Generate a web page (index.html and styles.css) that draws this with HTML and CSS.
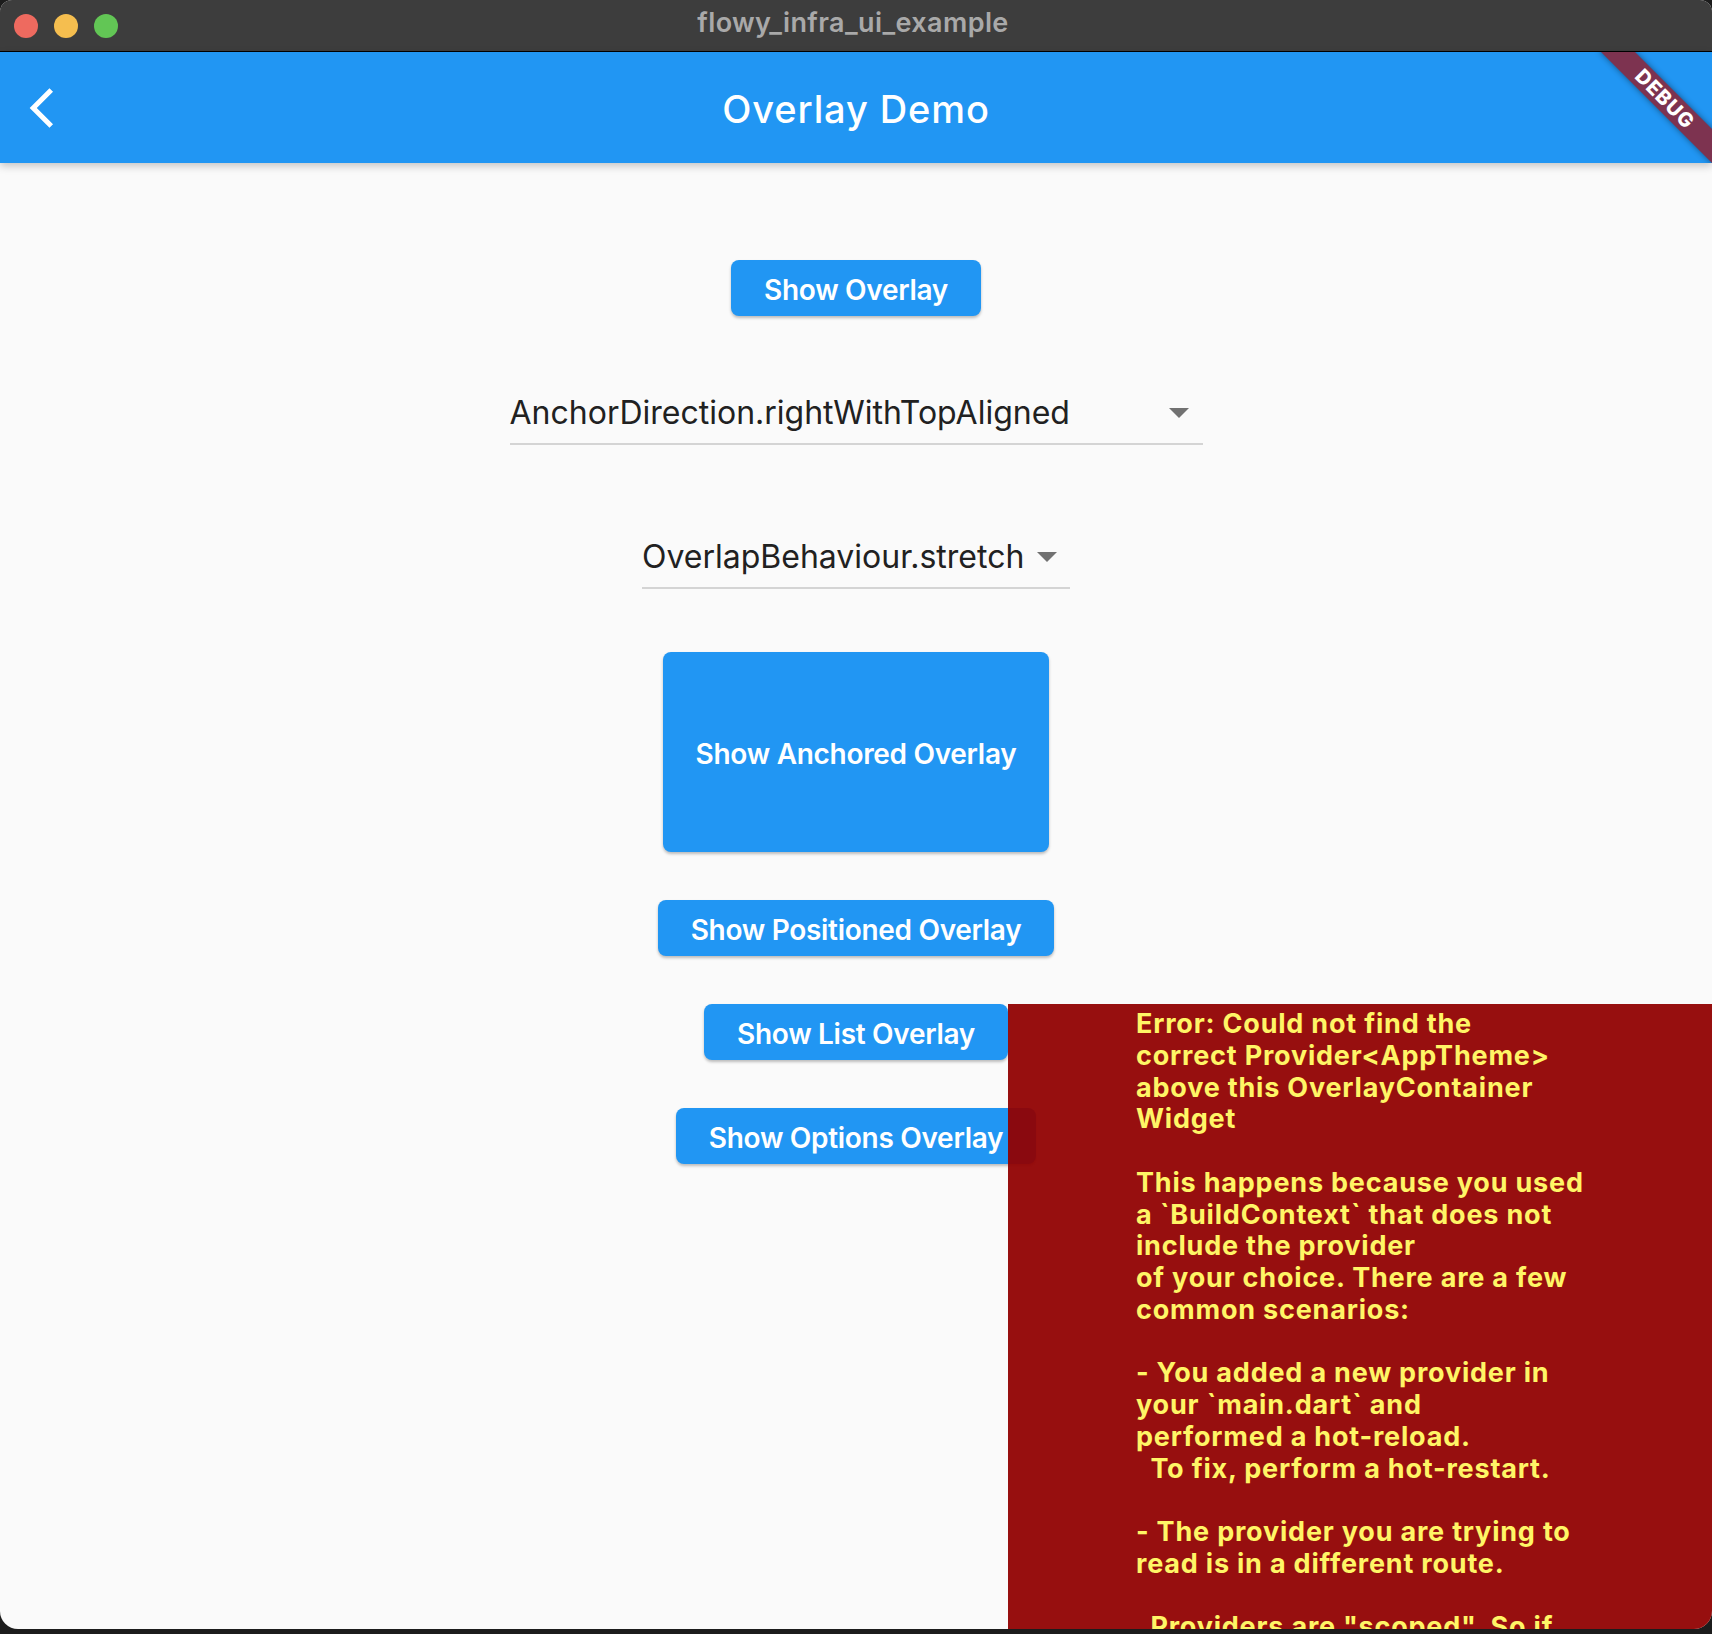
FILE: index.html
```html
<!DOCTYPE html>
<html lang="en">
<head>
    <meta charset="UTF-8">
    <meta name="viewport" content="width=device-width, initial-scale=1.0">
    <title>flowy_infra_ui_example</title>
    <link rel="stylesheet" href="styles.css">
</head>
<body>
    <div class="window">
        <div class="title-bar">
            <div class="traffic-lights">
                <span class="light red"></span>
                <span class="light yellow"></span>
                <span class="light green"></span>
            </div>
            <div class="window-title">flowy_infra_ui_example</div>
            <div></div>
        </div>

        <header class="app-bar">
            <div class="back-btn">
                <svg width="48" height="48" viewBox="0 0 24 24">
                    <path d="M17.51 3.87L15.73 2.1 5.84 12l9.9 9.9 1.77-1.77L9.38 12l8.13-8.13z" fill="#fff"/>
                </svg>
            </div>
            <h1 class="app-title">Overlay Demo</h1>
            <div></div>
            <div class="debug-banner">DEBUG</div>
        </header>

        <main class="content">
            <button class="btn first">Show Overlay</button>

            <div class="dropdown wide">
                <span>AnchorDirection.rightWithTopAligned</span>
                <span class="arrow"></span>
            </div>

            <div class="dropdown narrow">
                <span>OverlapBehaviour.stretch</span>
                <span class="arrow"></span>
            </div>

            <button class="btn tall">Show Anchored Overlay</button>
            <button class="btn">Show Positioned Overlay</button>
            <button class="btn">Show List Overlay</button>
            <button class="btn">Show Options Overlay</button>
        </main>

        <div class="error-box">Error: Could not find the
correct Provider&lt;AppTheme&gt;
above this OverlayContainer
Widget

This happens because you used
a `BuildContext` that does not
include the provider
of your choice. There are a few
common scenarios:

- You added a new provider in
your `main.dart` and
performed a hot-reload.
  To fix, perform a hot-restart.

- The provider you are trying to
read is in a different route.

  Providers are "scoped". So if</div>
    </div>
</body>
</html>
```

FILE: styles.css
```css
body {
    margin: 0;
    padding: 0;
    background-color: #1c1c1c;
    font-family: Inter, "Noto Sans", sans-serif;
}

.window {
    position: relative;
    width: 1712px;
    height: 1629px;
    display: flex;
    flex-direction: column;
    border-radius: 12px 12px 18px 18px;
    overflow: hidden;
    background-color: #fafafa;
}

/* mac title bar */
.title-bar {
    height: 51px;
    border-bottom: 1px solid #000;
    background-color: #3d3d3d;
    display: grid;
    grid-template-columns: 1fr auto 1fr;
    align-items: center;
}

.traffic-lights {
    display: flex;
    gap: 16px;
    padding-left: 14px;
}

.light {
    width: 24px;
    height: 24px;
    border-radius: 50%;
}

.light.red { background-color: #ee6a5f; }
.light.yellow { background-color: #f5be4f; }
.light.green { background-color: #62c655; }

.window-title {
    color: #a9a9a9;
    font-size: 27px;
    font-weight: 600;
    letter-spacing: 0.4px;
    padding-bottom: 6px;
    margin-right: 6px;
}

/* app bar */
.app-bar {
    position: relative;
    z-index: 2;
    height: 111px;
    background-color: #2196f3;
    display: grid;
    grid-template-columns: 1fr auto 1fr;
    align-items: center;
    overflow: hidden;
    box-shadow: 0 3px 8px rgba(0, 0, 0, 0.22);
}

.back-btn {
    padding-left: 18px;
    display: flex;
}

.app-title {
    margin: 2px 0 0 0;
    color: white;
    font-size: 38px;
    font-weight: 500;
    letter-spacing: 0.9px;
}

.debug-banner {
    position: absolute;
    left: 1585px;
    top: 35px;
    width: 160px;
    height: 24px;
    line-height: 24px;
    transform: rotate(45deg);
    background-color: #7d3350;
    color: white;
    font-size: 20px;
    font-weight: 800;
    letter-spacing: 1px;
    text-align: center;
    box-shadow: 0 0 6px rgba(0, 0, 0, 0.45);
}

/* page body */
.content {
    flex: 1;
    display: flex;
    flex-direction: column;
    align-items: center;
    padding-top: 97px;
}

.btn {
    height: 56px;
    margin-top: 48px;
    padding: 3px 33px 0 33px;
    border: none;
    border-radius: 8px;
    background-color: #2196f3;
    color: white;
    font-family: Inter, "Noto Sans", sans-serif;
    font-size: 28px;
    font-weight: 600;
    letter-spacing: -0.3px;
    box-shadow: 0 2px 3px rgba(0, 0, 0, 0.25);
}

.btn.first {
    margin-top: 0;
}

.btn.tall {
    height: 200px;
    margin-top: 63px;
}

.dropdown {
    display: flex;
    justify-content: space-between;
    align-items: center;
    height: 48px;
    padding-bottom: 6px;
    border-bottom: 2px solid #d4d4d4;
    color: #212121;
    font-size: 32px;
    line-height: 48px;
}

.dropdown.wide {
    width: 693px;
    margin-top: 73px;
}

.dropdown.narrow {
    width: 428px;
    margin-top: 88px;
}

.dropdown .arrow {
    width: 48px;
    height: 48px;
    display: flex;
    align-items: center;
    justify-content: center;
}

.dropdown .arrow::before {
    content: "";
    border-left: 10px solid transparent;
    border-right: 10px solid transparent;
    border-top: 10px solid #717171;
}

/* provider error widget */
.error-box {
    position: absolute;
    left: 1008px;
    top: 1004px;
    right: 0;
    bottom: 0;
    z-index: 3;
    padding: 4px 0 0 128px;
    background-color: rgba(144, 0, 0, 0.94);
    color: #fff566;
    font-size: 27px;
    font-weight: 700;
    line-height: 31.75px;
    letter-spacing: 0.8px;
    white-space: pre;
    overflow: hidden;
}
```
